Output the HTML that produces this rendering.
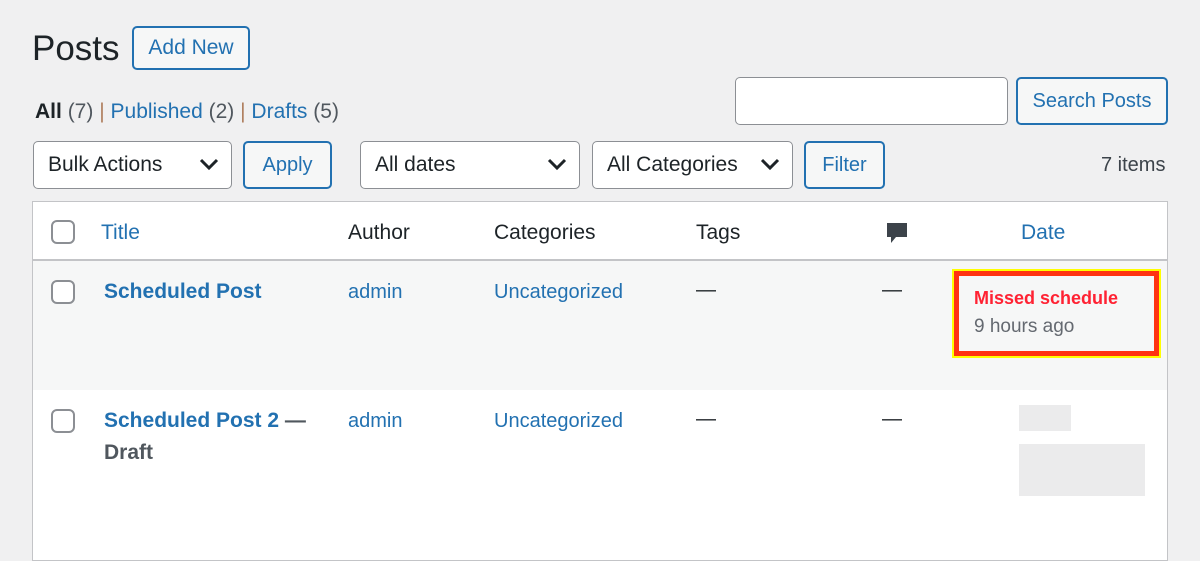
<!DOCTYPE html>
<html><head><style>
body{margin:0;width:1200px;height:543px;background:#f0f0f1;font-family:"Liberation Sans",sans-serif;color:#1d2327;position:relative;overflow:hidden}
.a{position:absolute;white-space:nowrap}
.btn{position:absolute;border:2px solid #2271b1;border-radius:5px;color:#2271b1;background:#f6f7f7;font-size:20px;box-sizing:border-box;display:flex;align-items:center;justify-content:center}
.sel{position:absolute;border:1.5px solid #8c8f94;border-radius:5px;background:#fff;font-size:21px;box-sizing:border-box;display:flex;align-items:center;padding-left:14px}
.sel svg{position:absolute;right:12px;top:15px}
.cb{position:absolute;width:24px;height:24px;border:2px solid #8c8f94;border-radius:6px;background:#fff;box-sizing:border-box}
.l{color:#2271b1}
</style></head><body>
<div class="a" style="left:32px;top:29px;font-size:35px">Posts</div>
<div class="btn" style="left:132px;top:26px;width:118px;height:44px;background:#f6f7f7;font-size:21px">Add New</div>
<div class="a" style="left:35px;top:100px;font-size:21px"><b style="font-weight:600">All</b> <span style="color:#50575e">(7)</span> <span style="color:#b08060">|</span> <span class="l">Published</span> <span style="color:#50575e">(2)</span> <span style="color:#b08060">|</span> <span class="l">Drafts</span> <span style="color:#50575e">(5)</span></div>
<div class="a" style="left:735px;top:77px;width:273px;height:48px;border:1.5px solid #8c8f94;border-radius:5px;background:#fff;box-sizing:border-box"></div>
<div class="btn" style="left:1016px;top:77px;width:152px;height:48px">Search Posts</div>
<div class="sel" style="left:33px;top:141px;width:199px;height:48px">Bulk Actions<svg width="20" height="14"><path d="M2 3l8 8 8-8" stroke="#1d2327" stroke-width="3" fill="none"/></svg></div>
<div class="btn" style="left:243px;top:141px;width:89px;height:48px">Apply</div>
<div class="sel" style="left:360px;top:141px;width:220px;height:48px">All dates<svg width="20" height="14"><path d="M2 3l8 8 8-8" stroke="#1d2327" stroke-width="3" fill="none"/></svg></div>
<div class="sel" style="left:592px;top:141px;width:201px;height:48px">All Categories<svg width="20" height="14"><path d="M2 3l8 8 8-8" stroke="#1d2327" stroke-width="3" fill="none"/></svg></div>
<div class="btn" style="left:804px;top:141px;width:81px;height:48px">Filter</div>
<div class="a" style="left:1101px;top:154px;font-size:20px;color:#3c434a">7 items</div>
<div class="a" style="left:32px;top:201px;width:1136px;height:360px;background:#fff;border:1.5px solid #c3c4c7;box-sizing:border-box"></div>
<div class="a" style="left:33px;top:259px;width:1134px;height:2px;background:#c3c4c7"></div>
<div class="a" style="left:33px;top:261px;width:1134px;height:129px;background:#f6f7f7"></div>
<div class="cb" style="left:51px;top:220px"></div>
<div class="a l" style="left:101px;top:221px;font-size:21px">Title</div>
<div class="a" style="left:348px;top:221px;font-size:21px">Author</div>
<div class="a" style="left:494px;top:221px;font-size:21px">Categories</div>
<div class="a" style="left:696px;top:221px;font-size:21px">Tags</div>
<svg class="a" style="left:885px;top:221px" width="24" height="24"><path d="M2 2h20v14h-11l-5 6v-6h-4z" fill="#3c434a"/></svg>
<div class="a l" style="left:1021px;top:221px;font-size:21px">Date</div>
<div class="cb" style="left:51px;top:280px"></div>
<div class="a l" style="left:104px;top:280px;font-size:21px;font-weight:bold">Scheduled Post</div>
<div class="a l" style="left:348px;top:281px;font-size:20px">admin</div>
<div class="a l" style="left:494px;top:281px;font-size:20px">Uncategorized</div>
<div class="a" style="left:696px;top:279px;font-size:20px">—</div>
<div class="a" style="left:882px;top:279px;font-size:20px">—</div>
<div class="a" style="left:954px;top:271px;width:205px;height:85px;border:5px solid #f31;outline:2px solid #ff0;box-sizing:border-box;background:#f6f7f7"></div>
<div class="a" style="left:974px;top:288px;font-size:18px;color:#f23;font-weight:600">Missed schedule</div>
<div class="a" style="left:974px;top:316px;font-size:19px;color:#646970">9 hours ago</div>
<div class="cb" style="left:51px;top:409px"></div>
<div class="a l" style="left:104px;top:409px;font-size:21px;font-weight:bold">Scheduled Post 2 <span style="color:#50575e">—</span></div>
<div class="a" style="left:104px;top:441px;font-size:21px;font-weight:bold;color:#50575e">Draft</div>
<div class="a l" style="left:348px;top:410px;font-size:20px">admin</div>
<div class="a l" style="left:494px;top:410px;font-size:20px">Uncategorized</div>
<div class="a" style="left:696px;top:408px;font-size:20px">—</div>
<div class="a" style="left:882px;top:408px;font-size:20px">—</div>
<div class="a" style="left:1019px;top:405px;width:52px;height:26px;background:#ebebec"></div>
<div class="a" style="left:1019px;top:444px;width:126px;height:52px;background:#ebebec"></div>
</body></html>
